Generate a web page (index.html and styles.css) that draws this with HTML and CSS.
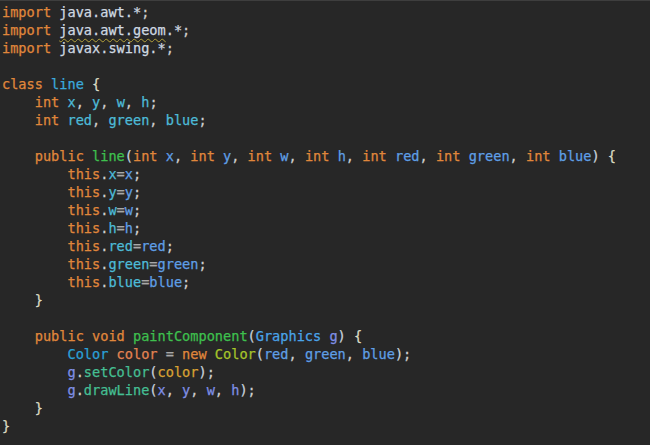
FILE: index.html
```html
<!DOCTYPE html>
<html>
<head>
<meta charset="utf-8">
<link rel="stylesheet" href="styles.css">
</head>
<body>
<pre class="code"><span class="kw">import</span> <span class="pkg">java.awt.*</span><span class="pn">;</span>
<span class="kw">import</span> <span class="pkg squiggle">java.awt.geom</span><span class="pkg">.*</span><span class="pn">;</span>
<span class="kw">import</span> <span class="pkg">javax.swing.*</span><span class="pn">;</span>

<span class="kw">class</span> <span class="cls">line</span> <span class="br">{</span>
    <span class="kw">int</span> <span class="fld">x</span><span class="pn">,</span> <span class="fld">y</span><span class="pn">,</span> <span class="fld">w</span><span class="pn">,</span> <span class="fld">h</span><span class="pn">;</span>
    <span class="kw">int</span> <span class="fld">red</span><span class="pn">,</span> <span class="fld">green</span><span class="pn">,</span> <span class="fld">blue</span><span class="pn">;</span>

    <span class="kw">public</span> <span class="fn">line</span><span class="pr">(</span><span class="kw">int</span> <span class="par">x</span><span class="pn">,</span> <span class="kw">int</span> <span class="par">y</span><span class="pn">,</span> <span class="kw">int</span> <span class="par">w</span><span class="pn">,</span> <span class="kw">int</span> <span class="par">h</span><span class="pn">,</span> <span class="kw">int</span> <span class="par">red</span><span class="pn">,</span> <span class="kw">int</span> <span class="par">green</span><span class="pn">,</span> <span class="kw">int</span> <span class="par">blue</span><span class="pr">)</span> <span class="br">{</span>
        <span class="kw">this</span><span class="pn">.</span><span class="fld">x</span><span class="op">=</span><span class="par">x</span><span class="pn">;</span>
        <span class="kw">this</span><span class="pn">.</span><span class="fld">y</span><span class="op">=</span><span class="par">y</span><span class="pn">;</span>
        <span class="kw">this</span><span class="pn">.</span><span class="fld">w</span><span class="op">=</span><span class="par">w</span><span class="pn">;</span>
        <span class="kw">this</span><span class="pn">.</span><span class="fld">h</span><span class="op">=</span><span class="par">h</span><span class="pn">;</span>
        <span class="kw">this</span><span class="pn">.</span><span class="fld">red</span><span class="op">=</span><span class="par">red</span><span class="pn">;</span>
        <span class="kw">this</span><span class="pn">.</span><span class="fld">green</span><span class="op">=</span><span class="par">green</span><span class="pn">;</span>
        <span class="kw">this</span><span class="pn">.</span><span class="fld">blue</span><span class="op">=</span><span class="par">blue</span><span class="pn">;</span>
    <span class="br">}</span>

    <span class="kw">public</span> <span class="kw">void</span> <span class="fn">paintComponent</span><span class="pr">(</span><span class="typ">Graphics</span> <span class="par2">g</span><span class="pr">)</span> <span class="br">{</span>
        <span class="typ2">Color</span> <span class="loc">color</span> <span class="op">=</span> <span class="kw">new</span> <span class="ctor">Color</span><span class="pr">(</span><span class="par">red</span><span class="pn">,</span> <span class="par">green</span><span class="pn">,</span> <span class="par">blue</span><span class="pr">)</span><span class="pn">;</span>
        <span class="par2">g</span><span class="pn">.</span><span class="mth">setColor</span><span class="pr">(</span><span class="loc2">color</span><span class="pr">)</span><span class="pn">;</span>
        <span class="par2">g</span><span class="pn">.</span><span class="mth">drawLine</span><span class="pr">(</span><span class="par2">x</span><span class="pn">,</span> <span class="par2">y</span><span class="pn">,</span> <span class="par2">w</span><span class="pn">,</span> <span class="par2">h</span><span class="pr">)</span><span class="pn">;</span>
    <span class="br">}</span>
<span class="br">}</span></pre>
</body>
</html>
```

FILE: styles.css
```css
html, body {
  margin: 0;
  padding: 0;
  background: #272727;
}
body {
  border-top: 1px solid #3e3e3e;
  height: 444px;
  overflow: hidden;
}
.code {
  margin: 0;
  padding: 2px 0 0 2px;
  font-family: "DejaVu Sans Mono", "Liberation Mono", monospace;
  font-size: 13.6px;
  line-height: 18px;
  color: #d4d4d4;
  -webkit-text-stroke: 0.25px currentColor;
}
.code span { -webkit-text-stroke: 0.25px currentColor; }
.kw { color: #e0873b; }
.pkg { color: #cfd9e2; }
.squiggle {
  text-decoration: underline wavy #b4a23a;
  text-decoration-thickness: 1px;
  text-underline-offset: 3px;
}
.pn { color: #cfcfcf; }
.cls { color: #3ba9dc; }
.br { color: #dcdcc4; }
.fld { color: #4dbbd8; }
.par { color: #5f9fe6; }
.par2 { color: #7f8fe6; }
.fn { color: #3ec04e; }
.pr { color: #c9d2dc; }
.op { color: #a8a8a8; }
.typ { color: #4aa4ea; }
.typ2 { color: #2aa0d8; }
.loc { color: #e38352; }
.loc2 { color: #d9a233; }
.ctor { color: #a6c52a; }
.mth { color: #45bf93; }
```
